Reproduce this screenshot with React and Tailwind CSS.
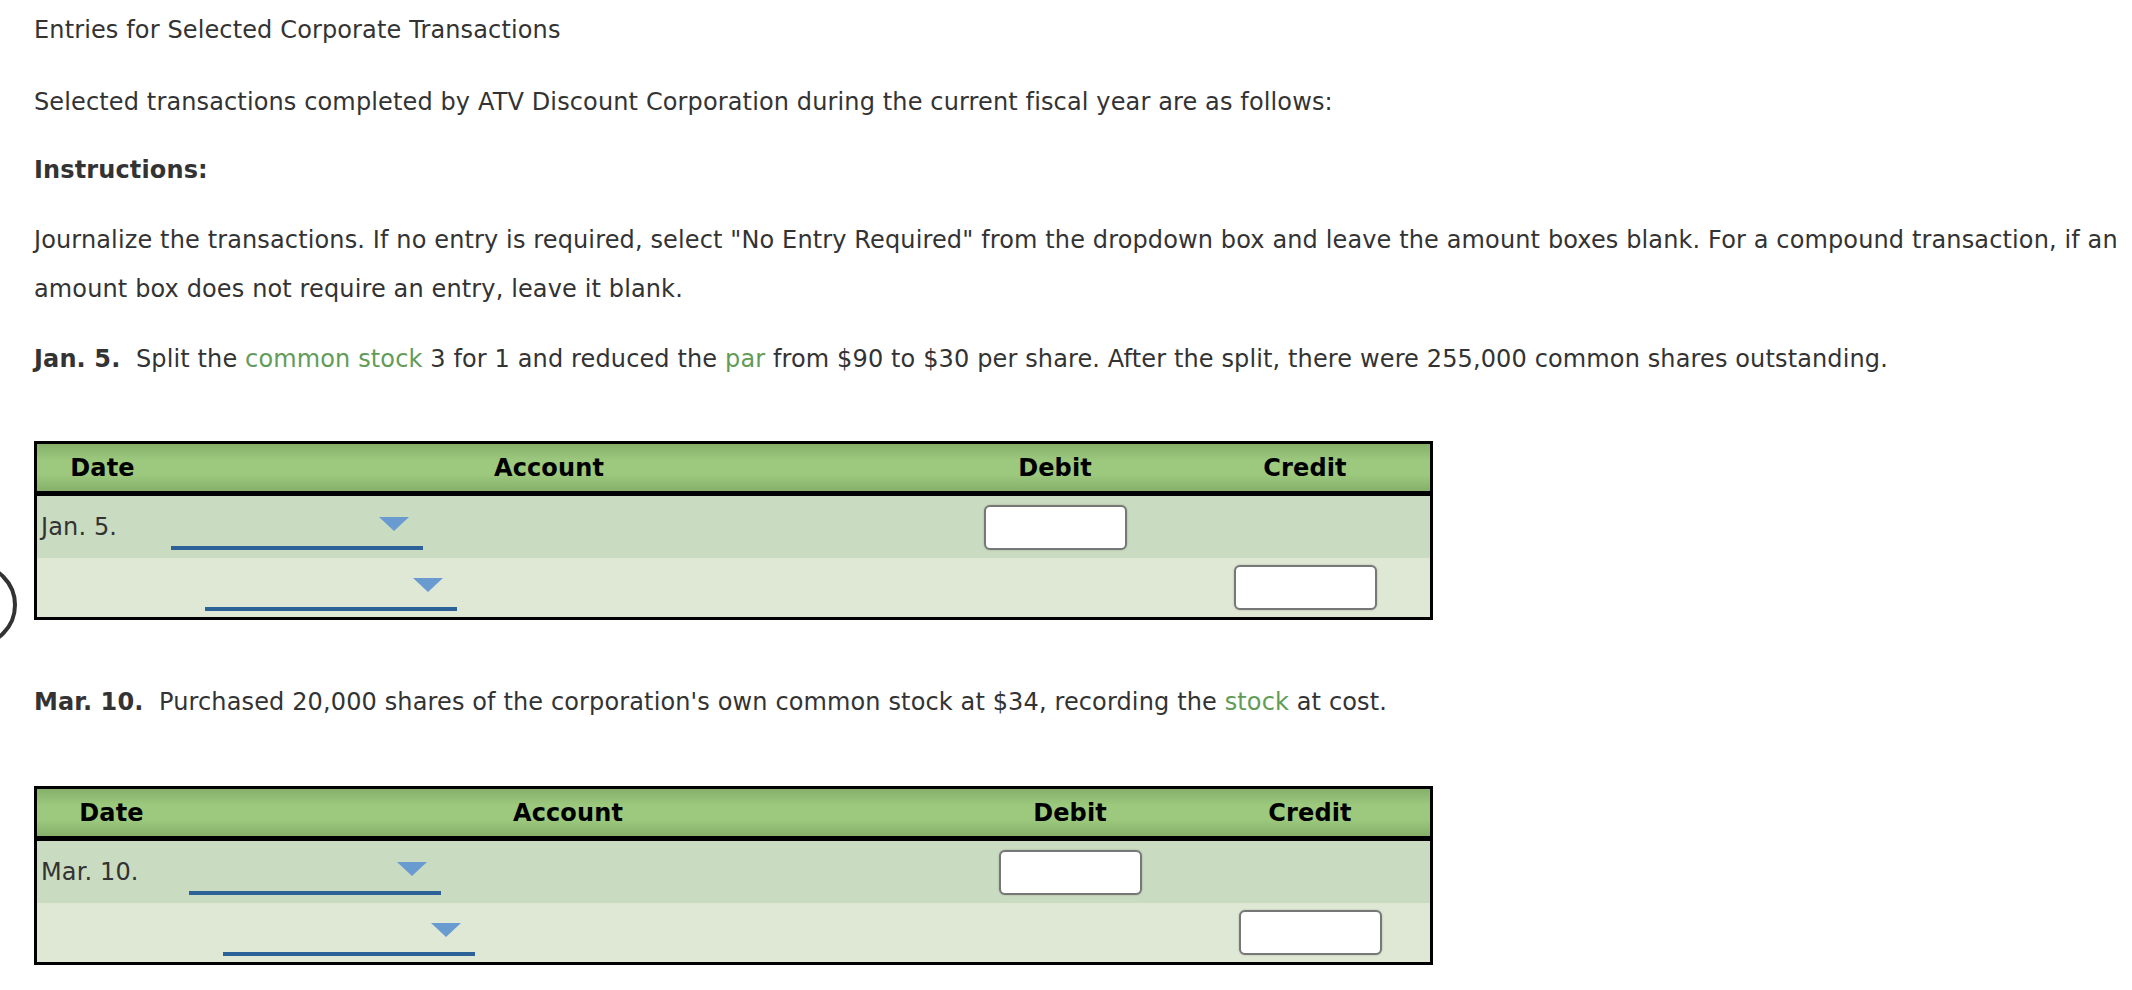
import React from 'react'

const Triangle = () => (
  <svg width="30" height="14" viewBox="0 0 30 14" className="block">
    <polygon points="0,0 30,0 15,14" fill="#6a9bd0" />
  </svg>
)

const Dropdown = ({ indent }) => (
  <div className={indent ? 'pl-[37px]' : 'pl-[3px]'}>
    <div className="w-[252px] h-[46px] border-b-4 border-[#2d6299] flex items-center justify-end pr-[14px] pb-[2px]">
      <Triangle />
    </div>
  </div>
)

const AmountBox = () => (
  <div className="w-[143px] h-[45px] bg-white border-2 border-[#777] rounded-[6px] shadow-[0_0_2px_rgba(0,0,0,0.25)]"></div>
)

const Journal = ({ date, cols }) => {
  const grid = `grid ${cols}`
  return (
    <div className="w-[1399px] border-[3px] border-black">
      <div className={`${grid} h-[47px] items-center font-bold text-black bg-[linear-gradient(to_bottom,#86b06a,#9cc97e_35%,#9cc97e_65%,#86b069)]`}>
        <div className="text-center">Date</div>
        <div className="text-center">Account</div>
        <div className="text-center">Debit</div>
        <div className="text-center">Credit</div>
      </div>
      <div className="h-[5px] bg-black"></div>
      <div className={`${grid} h-[62px] items-center bg-[#c9dcc1]`}>
        <div className="pl-[4px] text-[#333]">{date}</div>
        <Dropdown />
        <div className="flex justify-center"><AmountBox /></div>
        <div></div>
      </div>
      <div className={`${grid} h-[59px] items-center bg-[#dfe8d5]`}>
        <div></div>
        <Dropdown indent />
        <div></div>
        <div className="flex justify-center"><AmountBox /></div>
      </div>
    </div>
  )
}

const Term = ({ children }) => <span className="text-[#629c58]">{children}</span>

export default function App() {
  return (
    <div className="relative min-h-[990px] bg-white overflow-hidden text-[24px] tracking-[0.13px] text-[#333] font-['DejaVu_Sans',Verdana,sans-serif]">
      {/* cut-off circle at the left edge */}
      <div className="absolute left-[-67px] top-[563px] w-[84px] h-[84px] rounded-full border-4 border-[#333]"></div>

      <div className="pl-[34px] pr-[4px] pt-[12px]">
        <p className="leading-[36px]">Entries for Selected Corporate Transactions</p>
        <p className="leading-[36px] mt-[36px]">
          Selected transactions completed by ATV Discount Corporation during the current fiscal year are as follows:
        </p>
        <p className="leading-[36px] mt-[32px] font-bold">Instructions:</p>
        <p className="leading-[49px] mt-[28px]">
          Journalize the transactions. If no entry is required, select "No Entry Required" from the dropdown box and leave the amount boxes blank. For a compound transaction, if an amount box does not require an entry, leave it blank.
        </p>
        <p className="leading-[36px] mt-[27px]">
          <span className="font-bold">Jan. 5.</span>&nbsp; Split the <Term>common stock</Term> 3 for 1 and reduced the <Term>par</Term> from $90 to $30 per share. After the split, there were 255,000 common shares outstanding.
        </p>

        <div className="mt-[64px]">
          <Journal date="Jan. 5." cols="grid-cols-[131px_762px_250px_250px]" />
        </div>

        <p className="leading-[36px] mt-[64px]">
          <span className="font-bold">Mar. 10.</span>&nbsp; Purchased 20,000 shares of the corporation's own common stock at $34, recording the <Term>stock</Term> at cost.
        </p>

        <div className="mt-[66px]">
          <Journal date="Mar. 10." cols="grid-cols-[149px_764px_240px_240px]" />
        </div>
      </div>
    </div>
  )
}
